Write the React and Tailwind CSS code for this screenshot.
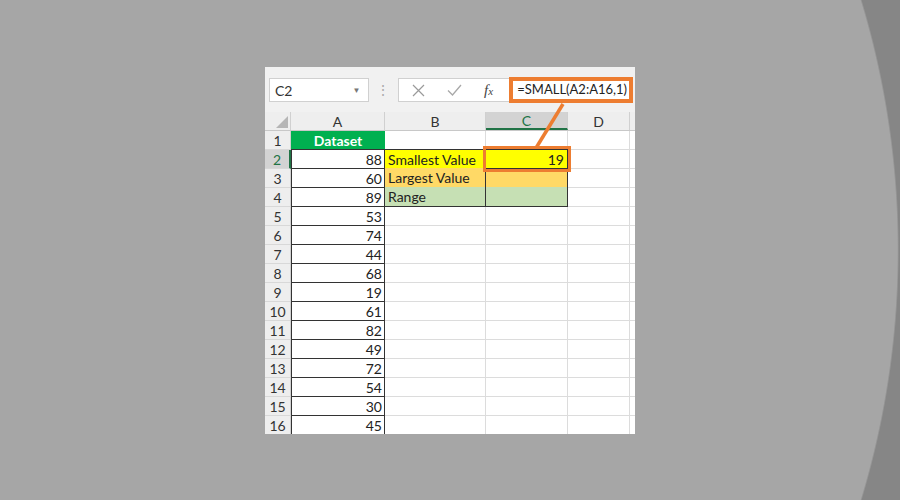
import React from "react";

const rows = [
  { n: 1, a: "Dataset" },
  { n: 2, a: "88", b: "Smallest Value", c: "19" },
  { n: 3, a: "60", b: "Largest Value" },
  { n: 4, a: "89", b: "Range" },
  { n: 5, a: "53" },
  { n: 6, a: "74" },
  { n: 7, a: "44" },
  { n: 8, a: "68" },
  { n: 9, a: "19" },
  { n: 10, a: "61" },
  { n: 11, a: "82" },
  { n: 12, a: "49" },
  { n: 13, a: "72" },
  { n: 14, a: "54" },
  { n: 15, a: "30" },
  { n: 16, a: "45" },
];

const fills = {
  2: "bg-[#ffff00]",
  3: "bg-[#ffd966]",
  4: "bg-[#c6e0b4]",
};

function Toolbar() {
  return (
    <div className="h-[45px] bg-[#f1f1f1] flex items-center pl-[4px] pr-[2px] pt-[1px]">
      <div className="w-[101px] h-[24px] bg-white border border-[#d0d0d0] flex items-center justify-between pl-[5px] pr-[7px] text-[14px] text-[#333]">
        <span>C2</span>
        <span className="text-[8px] text-[#777]">▼</span>
      </div>
      <div className="w-[30px] flex justify-center text-[#aaa] text-[14px] leading-none">⋮</div>
      <div className="flex-1 h-[24px] bg-white border border-[#d0d0d0] flex items-center">
        <div className="w-[110px] flex items-center pl-[13px] gap-[22px]">
          <svg width="13" height="13" viewBox="0 0 13 13">
            <path d="M1 1 L12 12 M12 1 L1 12" stroke="#9a9a9a" strokeWidth="1.2" fill="none" />
          </svg>
          <svg width="15" height="12" viewBox="0 0 15 12">
            <path d="M1 6.5 L5.5 11 L14 1" stroke="#a8a8a8" strokeWidth="1.3" fill="none" />
          </svg>
          <span className="italic text-[#444] text-[15px] leading-none" style={{ fontFamily: '"Liberation Serif", serif' }}>
            f<span className="text-[11px]">x</span>
          </span>
        </div>
        <div className="ml-auto h-[26px] -mr-[1px] w-[124px] border-[4px] border-[#ed7d31] bg-white flex items-center justify-end pr-[2px] text-[13px] whitespace-nowrap text-[#222]">
          =SMALL(A2:A16,1)
        </div>
      </div>
    </div>
  );
}

function HeaderRow() {
  const cols = [
    { l: "A", w: "w-[94px]" },
    { l: "B", w: "w-[101px]" },
    { l: "C", w: "w-[82px]", sel: true },
    { l: "D", w: "w-[62px]" },
  ];
  return (
    <div className="flex h-[19px] bg-[#eeeeee] border-b border-[#c8c8c8]">
      <div className="w-[26px] border-r border-[#d0d0d0] flex items-end justify-end pr-[2px] pb-[2px]">
        <div className="w-0 h-0 border-l-[12px] border-l-transparent border-b-[12px] border-b-[#b5b5b5]" />
      </div>
      {cols.map((c) => (
        <div
          key={c.l}
          className={`${c.w} border-r border-[#d0d0d0] flex items-center justify-center text-[14px] ${
            c.sel ? "bg-[#d3d3d3] text-[#217346] border-b-2 border-b-[#217346]" : "text-[#333]"
          }`}
        >
          {c.l}
        </div>
      ))}
      <div className="flex-1" />
    </div>
  );
}

function Row({ r }) {
  const fill = fills[r.n];
  const first = r.n === 1;
  return (
    <div className="flex h-[19px] text-[14px] text-[#222]">
      <div
        className={`w-[26px] flex items-center justify-center border-b border-[#d8d8d8] border-r ${
          r.n === 2 ? "bg-[#d3d3d3] text-[#217346] border-r-2 border-r-[#217346]" : "bg-[#eeeeee] text-[#333] border-r-[#d0d0d0]"
        }`}
      >
        {r.n}
      </div>
      {first ? (
        <div className="w-[94px] bg-[#00b050] text-white font-bold flex items-center justify-center border-b border-[#e0e0e0]">
          Dataset
        </div>
      ) : (
        <div className="w-[94px] bg-white border border-[#333] -mt-[1px] h-[20px] flex items-center justify-end pr-[2px]">
          {r.a}
        </div>
      )}
      {fill ? (
        <>
          <div className={`w-[101px] ${fill} border-b border-r border-[#333] ${r.n === 2 ? "border-t" : ""} -mt-[1px] h-[20px] flex items-center pl-[3px]`}>
            {r.b}
          </div>
          <div
            className={`w-[82px] ${fill} border-b border-r border-[#333] ${
              r.n === 2 ? "border-t relative z-10 outline-[3px] outline-solid outline-[#ed7d31] outline-offset-0" : ""
            } -mt-[1px] h-[20px] flex items-center justify-end pr-[3px]`}
          >
            {r.c}
          </div>
        </>
      ) : (
        <>
          <div className="w-[101px] bg-white border-b border-r border-[#dcdcdc]" />
          <div className="w-[82px] bg-white border-b border-r border-[#dcdcdc]" />
        </>
      )}
      <div className="w-[62px] bg-white border-b border-r border-[#dcdcdc]" />
      <div className="flex-1 bg-white border-b border-[#dcdcdc]" />
    </div>
  );
}

export default function App() {
  return (
    <div
      className="w-[900px] h-[500px] overflow-hidden bg-[radial-gradient(circle_863px_at_36px_250px,#a6a6a6_99.8%,#868686_100%)] pt-[67px] pl-[265px]"
      style={{ fontFamily: "Lato, 'Liberation Sans', sans-serif" }}
    >
      <div className="relative w-[370px] h-[367px] overflow-hidden bg-white">
        <Toolbar />
        <HeaderRow />
        {rows.map((r) => (
          <Row key={r.n} r={r} />
        ))}
        <svg className="absolute inset-0 pointer-events-none z-20" width="370" height="367">
          <line x1="298" y1="37" x2="271" y2="81" stroke="#ed7d31" strokeWidth="3.5" />
        </svg>
      </div>
    </div>
  );
}
